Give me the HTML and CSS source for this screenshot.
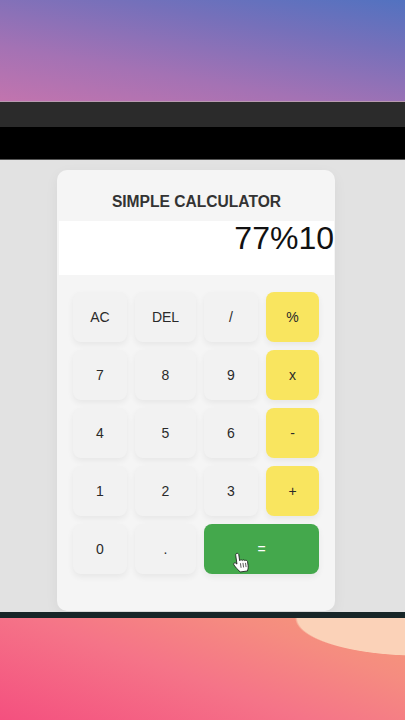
FILE: index.html
```html
<!DOCTYPE html>
<html lang="en">
<head>
<meta charset="utf-8">
<title>Simple Calculator</title>
<link rel="stylesheet" href="styles.css">
</head>
<body>
<div class="wall wall-top"></div>
<div class="bar-tabs"></div>
<div class="bar-black"></div>
<main class="page">
  <section class="calc">
    <h1 class="title">SIMPLE CALCULATOR</h1>
    <div class="display"><span class="value">77%10</span></div>
    <div class="keys">
      <button class="key">AC</button>
      <button class="key">DEL</button>
      <button class="key">/</button>
      <button class="key op">%</button>
      <button class="key">7</button>
      <button class="key">8</button>
      <button class="key">9</button>
      <button class="key op">x</button>
      <button class="key">4</button>
      <button class="key">5</button>
      <button class="key">6</button>
      <button class="key op">-</button>
      <button class="key">1</button>
      <button class="key">2</button>
      <button class="key">3</button>
      <button class="key op">+</button>
      <button class="key">0</button>
      <button class="key">.</button>
      <button class="key equals">=
        <svg class="cursor" viewBox="0 0 16 20" aria-hidden="true">
          <path d="M5.2 1.600c.8 0 1.400.6 1.400 1.400v5.200c.3-.7 1.900-.8 2.300.2.400-.6 1.800-.6 2.200.4.600-.4 2-.2 2.200 1v3.600c0 2.200-.7 3.200-1.200 4.600H5.600c-.5-1.300-1.500-2.200-2.600-3.600L1.200 11.200c-.7-1.100.6-2.300 1.700-1.400l1 1V3c0-.8.500-1.400 1.300-1.400z" fill="#fff" stroke="#1c1c1c" stroke-width=".7"/>
          <path d="M7 10.500v4M9.200 10.500v4M11.400 10.800v3.700" fill="none" stroke="#1c1c1c" stroke-width=".6"/>
        </svg>
      </button>
    </div>
  </section>
</main>
<div class="bar-bottom"></div>
<div class="wall wall-bottom"></div>
</body>
</html>
```
FILE: styles.css
```css
* { box-sizing: border-box; }
html, body { margin: 0; height: 100%; }
body {
  width: 405px;
  height: 720px;
  overflow: hidden;
  display: flex;
  flex-direction: column;
  font-family: "Liberation Sans", Arial, sans-serif;
}
.wall-top {
  height: 102px;
  border-bottom: 1px solid #b89ab0;
  background: linear-gradient(190deg, #5272c0 0%, #7670ba 30%, #a472b4 68%, #c274ae 100%);
}
.bar-tabs { height: 25px; background: #2b2b2b; }
.bar-black { height: 33px; background: #000; border-bottom: 1px solid #555; }
.page {
  height: 452px;
  background: #e2e2e2;
  padding: 10px 13px 0 0;
  display: flex;
  justify-content: center;
}
.calc {
  width: 278px;
  height: 441px;
  background: #f5f5f5;
  border-radius: 10px;
  box-shadow: 0 4px 14px rgba(0, 0, 0, .05);
  padding: 22px 1px 0 2px;
}
.title {
  margin: 0;
  height: 29px;
  line-height: 20px;
  text-align: center;
  font-size: 15.6px;
  font-weight: 700;
  color: #333;
}
.display {
  height: 54px;
  background: #fff;
  overflow: hidden;
  text-align: right;
  font-size: 32px;
  line-height: 34px;
  color: #111;
}
.value { display: block; }
.keys {
  margin: 17px 14px 0;
  display: grid;
  grid-template-columns: 54px 61px 54px 53px;
  grid-auto-rows: 50px;
  column-gap: 8px;
  row-gap: 8px;
}
.key {
  position: relative;
  border: 0;
  border-radius: 8px;
  background: #f2f2f2;
  box-shadow: 0 3px 6px rgba(0, 0, 0, .06);
  font-family: inherit;
  font-size: 14px;
  color: #2a2a2a;
  padding: 0;
}
.op { background: #f9e55f; }
.equals {
  grid-column: span 2;
  background: #44a84c;
  color: #fff;
}
.cursor {
  position: absolute;
  left: 28px;
  top: 27px;
  width: 19px;
  height: 23px;
  transform: rotate(-8deg);
}
.bar-bottom { height: 6px; background: #182628; }
.wall-bottom {
  flex: 1;
  background:
    radial-gradient(ellipse 125px 38px at 420px 0, #fbd2b8 98%, transparent 100%),
    linear-gradient(20deg, #f4507f 0%, #f57488 45%, #f58c80 75%, #f59a78 100%);
}
```
